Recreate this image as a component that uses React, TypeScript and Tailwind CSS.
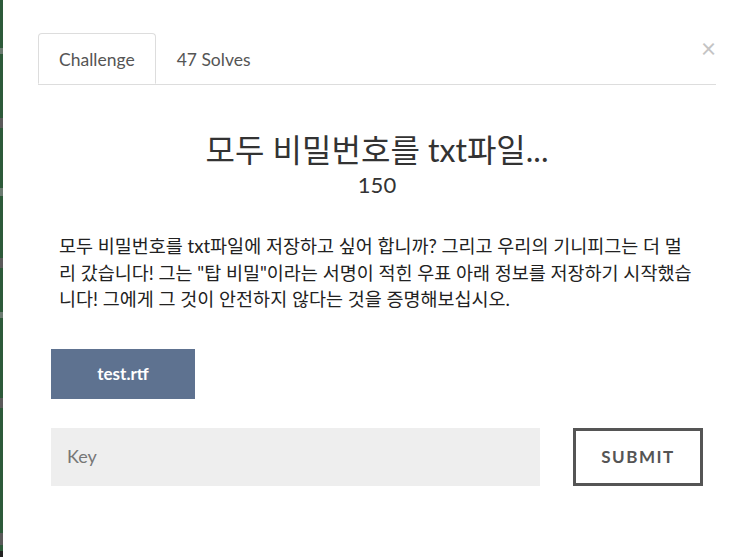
import React from 'react';

const font = { fontFamily: 'Lato, "Noto Sans CJK KR", sans-serif' };

export default function App() {
  return (
    <div className="flex h-[557px] w-[746px] overflow-hidden bg-white text-[#333]" style={font}>
      <div className="flex w-[3px] shrink-0 flex-col bg-[#2d5a3a]">
        <div className="mt-[48px] h-[6px] bg-[#6a7a70]" />
        <div className="mt-[64px] h-[10px] bg-[#5a5a5a]" />
        <div className="mt-[60px] h-[8px] bg-[#6a7a70]" />
        <div className="mt-[62px] h-[10px] bg-[#5a5a5a]" />
        <div className="mt-[44px] h-[6px] bg-[#6a7a70]" />
        <div className="mt-[80px] h-[10px] bg-[#5a5a5a]" />
        <div className="mt-[125px] h-[12px] bg-[#5a5a5a]" />
        <div className="mt-auto h-[6px] bg-[#222]" />
      </div>

      <div className="relative flex-1 pl-[35px] pr-[30px] pt-[33px]">
        <button className="absolute right-[30px] top-[35px] text-[26px] leading-none text-[#c4c4c4]">×</button>

        <div className="flex border-b border-[#ddd]">
          <div className="-mb-px flex h-[51px] items-center rounded-t-[4px] border border-b-white border-[#ddd] bg-white px-[20px] pt-[3px] text-[17.5px] text-[#555]">
            Challenge
          </div>
          <div className="flex h-[51px] items-center px-[21px] pt-[3px] text-[17.5px] text-[#555]">47 Solves</div>
        </div>

        <div className="px-[13px]">
          <h2 className="mt-[46px] text-center text-[32px] leading-[38px] text-[#333]">모두 비밀번호를 txt파일...</h2>
          <div className="mt-[3px] text-center text-[22px] leading-[26px] text-[#333]">150</div>

          <p className="mt-[35px] w-[645px] pl-[8px] text-[18.5px] leading-[26.5px] text-[#222]">
            모두 비밀번호를 txt파일에 저장하고 싶어 합니까? 그리고 우리의 기니피그는 더 멀리 갔습니다! 그는 "탑 비밀"이라는 서명이 적힌 우표 아래 정보를 저장하기 시작했습니다! 그에게 그 것이 안전하지 않다는 것을 증명해보십시오.
          </p>

          <div className="mt-[36px] flex h-[50px] w-[144px] items-center justify-center bg-[#5e7290] text-[17px] font-bold text-white">
            test.rtf
          </div>

          <div className="mt-[29px] flex items-center justify-between">
            <div className="flex h-[58px] w-[489px] items-center bg-[#eee] px-[16px] text-[18px] text-[#777]">Key</div>
            <button className="flex h-[58px] w-[130px] items-center justify-center border-[3px] border-[#555] text-[17px] font-bold tracking-[1.5px] text-[#555]">
              SUBMIT
            </button>
          </div>
        </div>
      </div>
    </div>
  );
}
